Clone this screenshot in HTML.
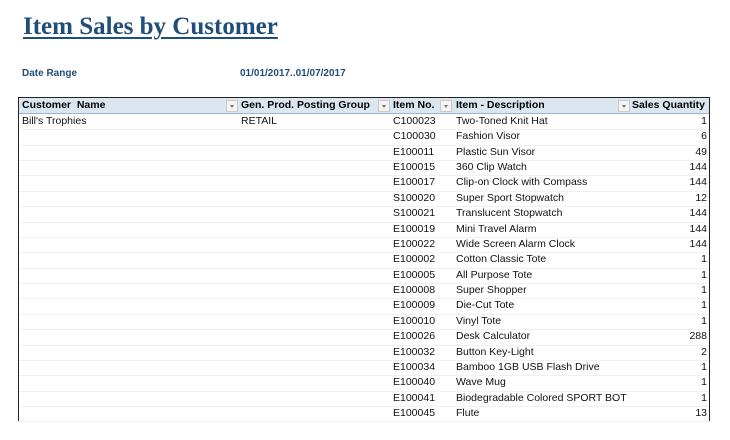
<!DOCTYPE html>
<html><head><meta charset="utf-8"><style>
body{margin:0;width:730px;height:440px;background:#fff;position:relative;overflow:hidden;font-family:"Liberation Sans",sans-serif;}
.t{position:absolute;white-space:nowrap;}
#title{left:23px;top:13px;font-family:"Liberation Serif",serif;font-weight:bold;font-size:25px;color:#1f4e79;text-decoration:underline;text-decoration-thickness:2px;text-underline-offset:3px;}
.lbl{font-size:10px;font-weight:bold;color:#1f4e79;top:68px;}
#tbl{position:absolute;left:18px;top:97px;width:690px;height:323px;border:1.5px solid #222;border-bottom:none;}
#hdr{position:absolute;left:0;top:0;width:690px;height:15px;background:#dce6f1;border-bottom:1px solid #9fb6d0;}
.h{position:absolute;top:1px;font-size:10.5px;font-weight:bold;color:#000;}
.dd{position:absolute;top:2px;width:10px;height:10px;border:1px solid #c8c8c8;background:#f4f4f4;}
.dd:after{content:"";position:absolute;left:3px;top:4px;border-left:2px solid transparent;border-right:2px solid transparent;border-top:3px solid #777;}
.r{position:absolute;left:0;width:690px;height:15.37px;border-bottom:1px solid #eef1f5;font-size:10.5px;color:#111;}
.r span{position:absolute;top:1px;white-space:nowrap;}
</style></head><body>
<div id="title" class="t">Item Sales by Customer</div>
<div class="t lbl" style="left:22px">Date Range</div>
<div class="t lbl" style="left:240px">01/01/2017..01/07/2017</div>
<div id="tbl">
<div id="hdr">
<div class="h" style="left:3px">Customer&nbsp; Name</div><div class="dd" style="left:207px"></div>
<div class="h" style="left:222px">Gen. Prod. Posting Group</div><div class="dd" style="left:359px"></div>
<div class="h" style="left:374px">Item No.</div><div class="dd" style="left:421px"></div>
<div class="h" style="left:437px">Item - Description</div><div class="dd" style="left:599px"></div>
<div class="h" style="right:4px">Sales Quantity</div>
</div>
<div id="rows"></div>
</div>
<script>
var d=[["C100023","Two-Toned Knit Hat",1],["C100030","Fashion Visor",6],["E100011","Plastic Sun Visor",49],["E100015","360 Clip Watch",144],["E100017","Clip-on Clock with Compass",144],["S100020","Super Sport Stopwatch",12],["S100021","Translucent Stopwatch",144],["E100019","Mini Travel Alarm",144],["E100022","Wide Screen Alarm Clock",144],["E100002","Cotton Classic Tote",1],["E100005","All Purpose Tote",1],["E100008","Super Shopper",1],["E100009","Die-Cut Tote",1],["E100010","Vinyl Tote",1],["E100026","Desk Calculator",288],["E100032","Button Key-Light",2],["E100034","Bamboo 1GB USB Flash Drive",1],["E100040","Wave Mug",1],["E100041","Biodegradable Colored SPORT BOT",1],["E100045","Flute",13]];
var h="";d.forEach(function(x,i){h+='<div class="r" style="top:'+(16+i*15.37)+'px">'+(i==0?'<span style="left:3px">Bill\'s Trophies</span><span style="left:222px">RETAIL</span>':'')+'<span style="left:374px">'+x[0]+'</span><span style="left:437px">'+x[1]+'</span><span style="right:2px">'+x[2]+'</span></div>';});
document.getElementById("rows").innerHTML=h;
</script>
</body></html>
